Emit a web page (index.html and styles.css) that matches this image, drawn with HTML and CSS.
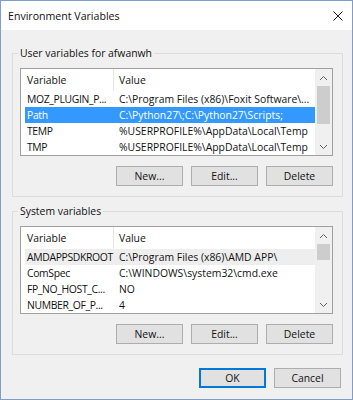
FILE: index.html
```html
<!DOCTYPE html>
<html lang="en">
<head>
<meta charset="utf-8">
<title>Environment Variables</title>
<link rel="stylesheet" href="styles.css">
</head>
<body>
<div class="window">
  <div class="titlebar">
    <span class="title">Environment Variables</span>
    <svg class="close" width="10" height="10" viewBox="0 0 10 10"><path d="M0.5 0.5L9.5 9.5M9.5 0.5L0.5 9.5" stroke="#1a1a1a" stroke-width="1" fill="none"/></svg>
  </div>
  <div class="content">
    <fieldset class="group group-user">
      <legend>User variables for afwanwh</legend>
      <div class="list">
        <div class="list-main">
          <div class="list-head"><div class="h1">Variable</div><div class="h2">Value</div></div>
          <div class="row"><div class="c1">MOZ_PLUGIN_P...</div><div class="c2">C:\Program Files (x86)\Foxit Software\...</div></div>
          <div class="row selected"><div class="c1">Path</div><div class="c2">C:\Python27\;C:\Python27\Scripts;</div></div>
          <div class="row"><div class="c1">TEMP</div><div class="c2">%USERPROFILE%\AppData\Local\Temp</div></div>
          <div class="row"><div class="c1">TMP</div><div class="c2">%USERPROFILE%\AppData\Local\Temp</div></div>
        </div>
        <div class="scrollbar">
          <div class="sb-btn"><svg width="9" height="6" viewBox="0 0 9 6"><polyline points="1,5 4.5,1.5 8,5" stroke="#606060" stroke-width="1" fill="none"/></svg></div>
          <div class="sb-track"><div class="sb-thumb thumb-user"></div></div>
          <div class="sb-btn"><svg width="9" height="6" viewBox="0 0 9 6"><polyline points="1,1 4.5,4.5 8,1" stroke="#606060" stroke-width="1" fill="none"/></svg></div>
        </div>
      </div>
      <div class="buttons"><button>New...</button><button>Edit...</button><button>Delete</button></div>
    </fieldset>
    <fieldset class="group group-sys">
      <legend>System variables</legend>
      <div class="list">
        <div class="list-main">
          <div class="list-head"><div class="h1">Variable</div><div class="h2">Value</div></div>
          <div class="row inactive"><div class="c1">AMDAPPSDKROOT</div><div class="c2">C:\Program Files (x86)\AMD APP\</div></div>
          <div class="row"><div class="c1">ComSpec</div><div class="c2">C:\WINDOWS\system32\cmd.exe</div></div>
          <div class="row"><div class="c1">FP_NO_HOST_C...</div><div class="c2">NO</div></div>
          <div class="row"><div class="c1">NUMBER_OF_P...</div><div class="c2">4</div></div>
        </div>
        <div class="scrollbar">
          <div class="sb-btn"><svg width="9" height="6" viewBox="0 0 9 6"><polyline points="1,5 4.5,1.5 8,5" stroke="#606060" stroke-width="1" fill="none"/></svg></div>
          <div class="sb-track"><div class="sb-thumb thumb-sys"></div></div>
          <div class="sb-btn"><svg width="9" height="6" viewBox="0 0 9 6"><polyline points="1,1 4.5,4.5 8,1" stroke="#606060" stroke-width="1" fill="none"/></svg></div>
        </div>
      </div>
      <div class="buttons"><button>New...</button><button>Edit...</button><button>Delete</button></div>
    </fieldset>
    <div class="dialog-buttons"><button class="default">OK</button><button>Cancel</button></div>
  </div>
</div>
</body>
</html>
```

FILE: styles.css
```css
* { box-sizing: border-box; }
html, body { margin: 0; padding: 0; }
body {
  width: 353px;
  height: 400px;
  font-family: "Open Sans", "Noto Sans", sans-serif;
  font-size: 10.4px;
  color: #111;
  background: #fff;
}
.window {
  width: 353px;
  height: 400px;
  border: 1px solid #7f9dc6;
  display: flex;
  flex-direction: column;
  background: #f0f0f0;
}
.titlebar {
  height: 29px;
  flex: none;
  background: #fff;
  display: flex;
  align-items: center;
  justify-content: space-between;
  padding: 0 9px 0 7px;
}
.title { line-height: 14px; font-size: 10.6px; }
.close { display: block; }
.content {
  flex: 1;
  display: flex;
  flex-direction: column;
}
.group {
  margin: 0 9px 0 11px;
  border: 1px solid #dcdcdc;
  padding: 8px 9px 10px 7px;
  min-inline-size: 0;
}
.group-user { margin-top: 16px; }
.group-sys { margin-top: 7px; }
.group legend {
  padding: 0 2px;
  margin-left: -2px;
  line-height: 14px;
  height: 14px;
}
.list {
  height: 88px;
  border: 1px solid #a0a0a0;
  background: #fff;
  display: flex;
}
.list-main { flex: 1; min-width: 0; }
.list-head { height: 22px; display: flex; }
.h1 {
  width: 93px;
  border-right: 1px solid #e5e5e5;
  padding-left: 6px;
  line-height: 22px;
}
.h2 { padding-left: 5px; line-height: 22px; }
.row {
  margin-left: 4px;
  height: 16px;
  line-height: 16px;
  display: flex;
  white-space: nowrap;
}
.c1 { width: 94px; flex: none; padding-left: 2px; overflow: hidden; letter-spacing: -0.35px; }
.c2 { flex: 1; overflow: hidden; }
.row.selected { background: #3399ff; color: #fff; }
.row.inactive { background: #eeeeee; }
.scrollbar {
  width: 17px;
  flex: none;
  background: #f0f0f0;
  display: flex;
  flex-direction: column;
}
.sb-btn {
  height: 17px;
  flex: none;
  display: flex;
  align-items: center;
  justify-content: center;
}
.sb-btn svg { display: block; }
.sb-track { flex: 1; }
.sb-thumb { margin: 0 2px; background: #cdcdcd; }
.thumb-user { height: 38px; }
.thumb-sys { height: 16px; }
.buttons {
  margin-top: 10px;
  display: flex;
  justify-content: flex-end;
  gap: 8px;
}
button {
  width: 67px;
  height: 20px;
  font: inherit;
  color: #111;
  background: #e1e1e1;
  border: 1px solid #adadad;
  padding: 0;
  line-height: 18px;
}
.dialog-buttons {
  margin: 13px 11px 0 0;
  display: flex;
  justify-content: flex-end;
  gap: 8px;
}
button.default {
  border-color: #0078d7;
  box-shadow: inset 0 0 0 1px #0078d7;
}
```
